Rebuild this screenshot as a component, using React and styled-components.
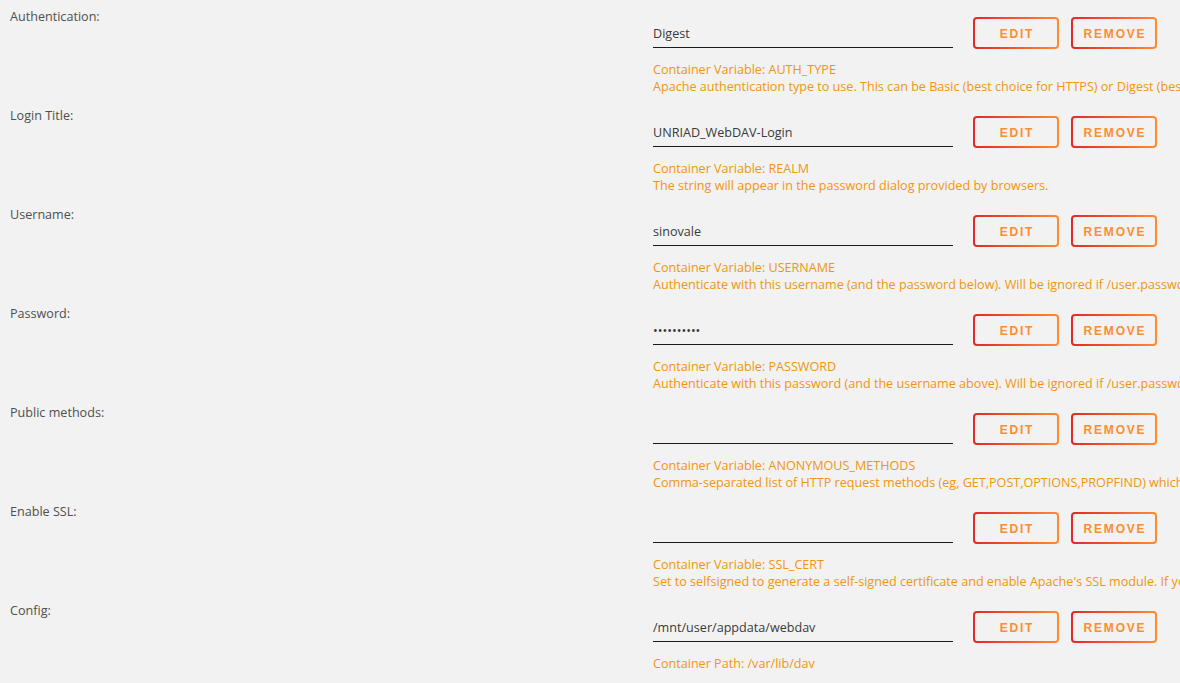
import React from "react";
import styled, { createGlobalStyle } from "styled-components";

const Global = createGlobalStyle`
  html, body { margin: 0; padding: 0; background: #f2f2f2; overflow: hidden; }
  body { font-family: "Open Sans", "Noto Sans", sans-serif; font-size: 12.6px; color: #4f4f4f; }
`;

const Page = styled.div`
  width: 1180px;
  height: 683px;
  overflow: hidden;
  background: #f2f2f2;
`;

const Row = styled.div`
  display: grid;
  grid-template-columns: 643px 1fr;
  padding: 0 0 4px 10px;
`;

const Label = styled.div`
  padding-top: 8px;
  line-height: 17px;
  color: #4f4f4f;
  white-space: nowrap;
`;

const Field = styled.div`
  padding-top: 17px;
  min-width: 0;
`;

const Controls = styled.div`
  display: flex;
  align-items: flex-start;
  gap: 12px;
`;

const Input = styled.div`
  box-sizing: border-box;
  width: 300px;
  height: 31px;
  padding-top: 2px;
  border-bottom: 1px solid #1c1c1c;
  display: flex;
  align-items: center;
  color: #3a3a3a;
  margin-right: 8px;
`;

const Button = styled.button`
  box-sizing: border-box;
  width: 86px;
  height: 32px;
  border: 2px solid transparent;
  border-radius: 4px;
  background:
    linear-gradient(#f2f2f2, #f2f2f2) padding-box,
    linear-gradient(90deg, #e22828 0%, #ff8c2f 100%) border-box;
  font-family: "Liberation Sans", "Open Sans", sans-serif;
  font-weight: bold;
  font-size: 12px;
  letter-spacing: 1.8px;
  color: #ff8c2f;
  padding: 2px 0 0 2px;
  cursor: pointer;
`;

const Desc = styled.div`
  margin-top: 12px;
  line-height: 17px;
  color: #f0960e;
  white-space: nowrap;
`;

const rows = [
  {
    label: "Authentication:",
    value: "Digest",
    kind: "Container Variable: AUTH_TYPE",
    text: "Apache authentication type to use. This can be Basic (best choice for HTTPS) or Digest (best choice for HTTP).",
  },
  {
    label: "Login Title:",
    value: "UNRIAD_WebDAV-Login",
    kind: "Container Variable: REALM",
    text: "The string will appear in the password dialog provided by browsers.",
  },
  {
    label: "Username:",
    value: "sinovale",
    kind: "Container Variable: USERNAME",
    text: "Authenticate with this username (and the password below). Will be ignored if /user.passwd is provided.",
  },
  {
    label: "Password:",
    value: "••••••••••",
    kind: "Container Variable: PASSWORD",
    text: "Authenticate with this password (and the username above). Will be ignored if /user.passwd is provided.",
  },
  {
    label: "Public methods:",
    value: "",
    kind: "Container Variable: ANONYMOUS_METHODS",
    text: "Comma-separated list of HTTP request methods (eg, GET,POST,OPTIONS,PROPFIND) which will not require authentication.",
  },
  {
    label: "Enable SSL:",
    value: "",
    kind: "Container Variable: SSL_CERT",
    text: "Set to selfsigned to generate a self-signed certificate and enable Apache's SSL module. If you specify a certificate, it will be used.",
  },
  {
    label: "Config:",
    value: "/mnt/user/appdata/webdav",
    kind: "Container Path: /var/lib/dav",
    text: "",
  },
];

export default function App() {
  return (
    <Page>
      <Global />
      {rows.map((r) => (
        <Row key={r.label}>
          <Label>{r.label}</Label>
          <Field>
            <Controls>
              <Input>{r.value}</Input>
              <Button>EDIT</Button>
              <Button>REMOVE</Button>
            </Controls>
            <Desc>
              {r.kind}
              {r.text && <br />}
              {r.text}
            </Desc>
          </Field>
        </Row>
      ))}
    </Page>
  );
}
